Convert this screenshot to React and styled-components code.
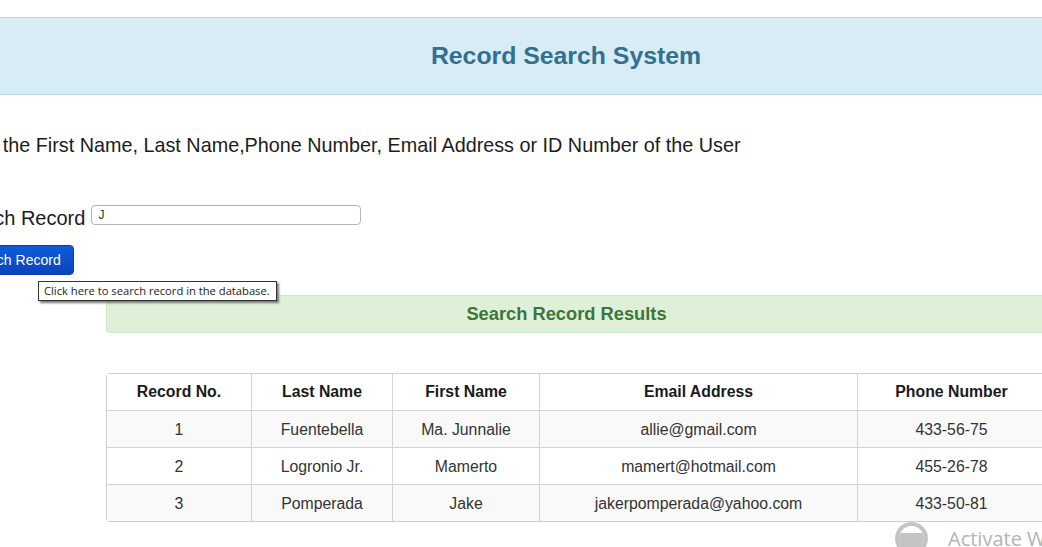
import React from "react";
import styled, { createGlobalStyle } from "styled-components";

const Global = createGlobalStyle`
  html, body { margin: 0; padding: 0; background: #fff; overflow: hidden; }
  body { font-family: "Liberation Sans", Arial, sans-serif; color: #222; }
`;

const Page = styled.div`
  position: relative;
  width: 1042px;
  height: 547px;
  overflow: hidden;
`;

const Content = styled.main`
  width: 1232px;
  margin-left: -50px;
  padding-top: 17px;
`;

const Banner = styled.header`
  height: 76px;
  display: flex;
  align-items: center;
  justify-content: center;
  background: #d8ecf6;
  border-top: 1px solid #b4dbe6;
  border-bottom: 1px solid #b4dbe6;
`;

const Title = styled.h1`
  margin: 0;
  font-size: 24.8px;
  font-weight: 700;
  color: #31708f;
`;

const Instruction = styled.p`
  margin: 37px 0 0 0;
  font-size: 19.8px;
  line-height: 26px;
  white-space: nowrap;
  color: #1c1c1c;
`;

const SearchRow = styled.div`
  display: flex;
  align-items: flex-start;
  gap: 6px;
  margin: 47px 0 0 2px;
`;

const SearchLabel = styled.label`
  font-size: 20px;
  line-height: 26px;
  color: #1c1c1c;
`;

const SearchInput = styled.input`
  box-sizing: border-box;
  width: 270px;
  height: 20px;
  margin-top: 0;
  padding: 0 6px;
  border: 1px solid #b5b5b5;
  border-radius: 4px;
  background: #fff;
  font-family: "Liberation Sans", Arial, sans-serif;
  font-size: 12px;
  color: #333;
`;

const SearchButton = styled.button`
  display: block;
  box-sizing: border-box;
  width: 120px;
  height: 30px;
  margin: 14px 0 0 4px;
  padding: 0;
  border: 1px solid #0a3fa8;
  border-radius: 4px;
  background: linear-gradient(#0f5bdc, #0a44bb);
  color: #fff;
  font-family: "Liberation Sans", Arial, sans-serif;
  font-size: 14px;
  text-align: center;
`;

const Results = styled.section`
  margin: 20px 0 0 156px;
`;

const ResultsBar = styled.div`
  box-sizing: border-box;
  width: 940px;
  height: 38px;
  padding-right: 20px;
  display: flex;
  align-items: center;
  justify-content: center;
  background: #dff0d8;
  border: 1px solid #d0e6c6;
  border-right: 0;
  border-radius: 4px 0 0 4px;
  font-size: 18.3px;
  font-weight: 700;
  color: #3c763d;
`;

const Table = styled.table`
  margin-top: 40px;
  width: 940px;
  table-layout: fixed;
  border-collapse: separate;
  border-spacing: 0;
  border: 1px solid #cfcfcf;
  border-right: 0;
  border-radius: 4px 0 0 4px;
  font-size: 15.8px;
`;

const HeadCell = styled.th`
  height: 36px;
  padding: 0;
  border-right: 1px solid #d4d4d4;
  font-weight: 700;
  color: #1a1a1a;
  background: #fff;
`;

const Cell = styled.td`
  height: 34px;
  padding: 2px 0 0;
  text-align: center;
  border-top: 1px solid #d4d4d4;
  border-right: 1px solid #d4d4d4;
  color: #333;
  background: ${(p) => (p.$odd ? "#f9f9f9" : "#fff")};
`;

const Tooltip = styled.div`
  position: absolute;
  left: 38px;
  top: 281px;
  box-sizing: border-box;
  width: 239px;
  height: 20px;
  padding: 0 5px;
  line-height: 18px;
  white-space: nowrap;
  background: #fff;
  border: 1px solid #333;
  box-shadow: 2px 2px 2px #777;
  font-family: "Open Sans", "Liberation Sans", sans-serif;
  font-size: 11.2px;
  color: #222;
`;

const Watermark = styled.div`
  position: absolute;
  left: 895px;
  top: 522px;
  display: flex;
  align-items: flex-start;
  gap: 20px;
  white-space: nowrap;
  font-family: "Open Sans", "Liberation Sans", sans-serif;
  font-size: 20px;
  line-height: 34px;
  color: #b4b4b4;
`;

const WatermarkIcon = styled.svg`
  flex: none;
  width: 33px;
  height: 33px;
`;

const rows = [
  ["1", "Fuentebella", "Ma. Junnalie", "allie@gmail.com", "433-56-75"],
  ["2", "Logronio Jr.", "Mamerto", "mamert@hotmail.com", "455-26-78"],
  ["3", "Pomperada", "Jake", "jakerpomperada@yahoo.com", "433-50-81"],
];
const headers = ["Record No.", "Last Name", "First Name", "Email Address", "Phone Number"];
const widths = [145, 141, 147, 318, 188];

export default function App() {
  return (
    <Page>
      <Global />
      <Content>
        <Banner>
          <Title>Record Search System</Title>
        </Banner>
        <Instruction>
          Enter the First Name, Last Name,Phone Number, Email Address or ID Number of the User
        </Instruction>
        <SearchRow>
          <SearchLabel htmlFor="q">Search Record</SearchLabel>
          <SearchInput id="q" defaultValue="J" />
        </SearchRow>
        <SearchButton>Search Record</SearchButton>
        <Results>
          <ResultsBar>Search Record Results</ResultsBar>
          <Table>
            <colgroup>
              {widths.map((w, i) => (
                <col key={i} style={{ width: w }} />
              ))}
            </colgroup>
            <thead>
              <tr>
                {headers.map((h) => (
                  <HeadCell key={h}>{h}</HeadCell>
                ))}
              </tr>
            </thead>
            <tbody>
              {rows.map((r, i) => (
                <tr key={r[0]}>
                  {r.map((c) => (
                    <Cell key={c} $odd={i % 2 === 0}>{c}</Cell>
                  ))}
                </tr>
              ))}
            </tbody>
          </Table>
        </Results>
      </Content>
      <Tooltip>Click here to search record in the database.</Tooltip>
      <Watermark>
        <WatermarkIcon viewBox="0 0 33 33">
          <circle cx="16.5" cy="16.5" r="14.5" fill="none" stroke="#c4c4c4" strokeWidth="4" />
          <path d="M5.3 11H27.7A12.5 12.5 0 1 1 5.3 11Z" fill="#c4c4c4" />
        </WatermarkIcon>
        <span>Activate Windows</span>
      </Watermark>
    </Page>
  );
}
